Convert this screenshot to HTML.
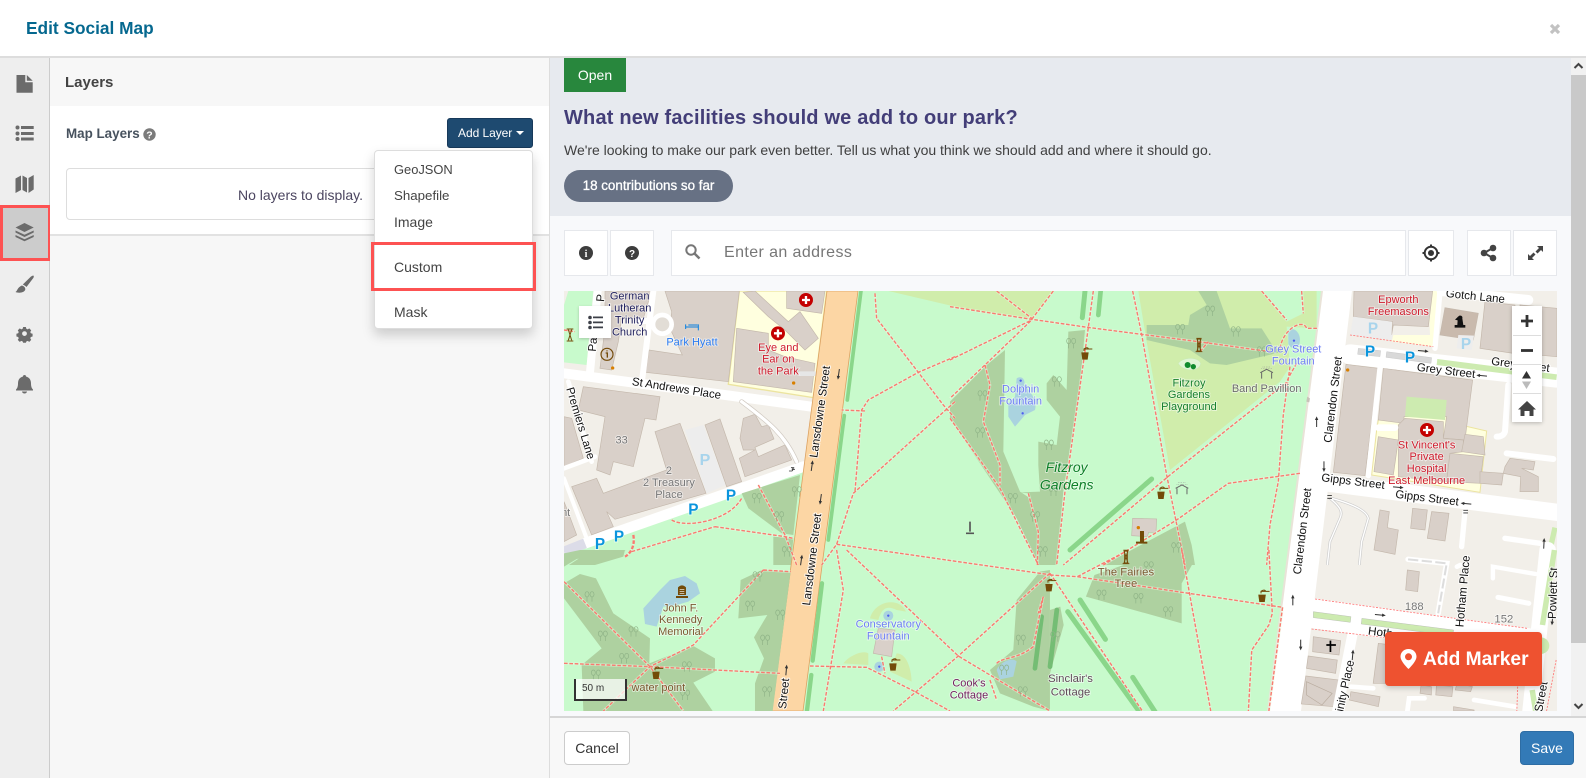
<!DOCTYPE html>
<html><head><meta charset="utf-8"><title>Edit Social Map</title>
<style>
html,body{margin:0;padding:0;width:1586px;height:778px;overflow:hidden;background:#fff;font-family:"Liberation Sans",sans-serif;color:#333}
.a{position:absolute;box-sizing:border-box;white-space:nowrap}
.tb{position:absolute;top:230px;height:46px;background:#fff;border:1px solid #e6e8ec;box-sizing:border-box}
.dd{position:absolute;left:394px;font-size:14px;color:#444;line-height:18px}
.m text{font-family:"Liberation Sans",sans-serif;font-size:33px;text-anchor:middle;paint-order:stroke;stroke:rgba(255,255,255,.55);stroke-width:5px}
.b polygon{fill:#d9d0c9;stroke:#c4b8ac;stroke-width:2}
.r path{fill:none;stroke:#fff;stroke-linecap:round}
.g path{fill:none;stroke:#8ad68a;stroke-linecap:round}
.w polygon{fill:#aed1a0}
.n text{font-size:34.5px;fill:#111;stroke-width:6px;stroke:rgba(255,255,255,.8)}
</style></head><body>

<!-- header -->
<div class="a" style="left:0;top:0;width:1586px;height:58px;background:#fff;border-bottom:2px solid #ddd"></div>
<div class="a" style="left:26px;top:17px;font-size:17.3px;font-weight:700;color:#05688f;line-height:22px">Edit Social Map</div>
<svg class="a" style="left:1549px;top:23px" width="12" height="12" viewBox="0 0 12 12"><path d="M2 2L10 10M10 2L2 10" stroke="#c2c2c2" stroke-width="3.2"/></svg>

<!-- rail -->
<div class="a" style="left:0;top:58px;width:50px;height:720px;background:#eee;border-right:1px solid #ccc"></div>
<div class="a" style="left:0;top:205px;width:51px;height:56px;background:#ccc;border:3px solid #fd5252"></div>
<svg class="a" style="left:0;top:58px" width="50" height="340" viewBox="0 58 50 340" fill="#6b6b6b">
<path d="M16.5 75H25.3V82.3H32.7V92.7H16.5ZM26.8 75L32.7 80.8H26.8Z"/>
<path d="M15.5 127.500a2 2 0 1 0 4 0a2 2 0 1 0-4 0ZM15.500 133.500a2 2 0 1 0 4 0a2 2 0 1 0-4 0ZM15.500 139a2 2 0 1 0 4 0a2 2 0 1 0-4 0ZM21 126h12.700v3H21ZM21 132h12.700v3H21ZM21 137.500h12.700v3H21Z"/>
<path d="M15.500 178.500L21 175.500V190L15.500 193ZM22.500 175.500L27 178V192.500L22.500 190ZM28.500 178L33.700 175V189.500L28.500 193Z"/>
<path d="M24.500 223L33.700 227.500L24.500 232L15.500 227.500Z"/>
<path d="M15.500 230.500L24.500 234.800L33.700 230.500V232.500L24.500 237L15.500 232.500ZM15.500 235L24.500 239.300L33.700 235V237L24.500 241.300L15.500 237Z"/>
<path d="M33 275.500C34 275.500 34 277 33.300 278L26.500 287C25.500 286 24 285 22.800 284.500L31 276.500ZM21.800 285.500C24 286 25.500 287.500 25.300 289.500C24.500 292.700 19 293.500 15.500 292C17.500 291 17.200 287.500 21.800 285.500Z"/>
<g transform="translate(24.500,333.600) scale(.8) translate(-24.500,-334.300)"><path fill-rule="evenodd" d="M22.800 326h3.400l.6 2.300 1.600.7 2.100-1.200 2.400 2.400-1.200 2.100.7 1.600 2.200.6v3.400l-2.200.6-.7 1.600 1.200 2.100-2.400 2.400-2.100-1.200-1.600.7-.6 1.700h-3.400l-.6-1.700-1.600-.7-2.100 1.200-2.400-2.400 1.200-2.100-.7-1.600-2.200-.6v-3.400l2.200-.6.7-1.600-1.200-2.100 2.400-2.400 2.100 1.200 1.600-.7ZM24.500 331.300a3 3 0 1 0 0 6a3 3 0 1 0 0-6Z"/></g>
<path d="M24.500 375a1.500 1.500 0 0 1 1.500 1.500C29.500 377.500 31 380 31 383.500C31 387 32 388.500 33 389.500V390.500H16V389.500C17 388.500 18 387 18 383.500C18 380 19.500 377.500 23 376.500A1.500 1.500 0 0 1 24.500 375ZM22 391.500H27A2.500 2 0 0 1 22 391.500Z"/>
</svg>

<!-- left panel -->
<div class="a" style="left:50px;top:58px;width:500px;height:720px;background:#f7f7f7;border-right:1px solid #ddd"></div>
<div class="a" style="left:65px;top:73px;font-size:15px;font-weight:700;color:#444;line-height:20px">Layers</div>
<div class="a" style="left:50px;top:106px;width:499px;height:130px;background:#fff;border-bottom:2px solid #e2e2e2"></div>
<div class="a" style="left:66px;top:125px;font-size:13.4px;font-weight:700;color:#47525e;line-height:18px">Map Layers</div>
<svg class="a" style="left:143px;top:128px" width="13" height="13" viewBox="0 0 13 13"><circle cx="6.500" cy="6.500" r="6.200" fill="#7b7b7b"/><text x="6.500" y="10.300" font-size="10.500" font-weight="700" fill="#fff" text-anchor="middle" font-family="Liberation Sans">?</text></svg>
<div class="a" style="left:447px;top:118px;width:86px;height:30px;background:#1e4a70;border:1px solid #17395a;border-radius:3px;color:#fff;font-size:12px;line-height:28px;padding-left:10px;letter-spacing:-.05px">Add Layer<span style="display:inline-block;margin-left:4px;vertical-align:2px;border-top:4px solid #fff;border-left:4px solid transparent;border-right:4px solid transparent"></span></div>
<div class="a" style="left:66px;top:168px;width:467px;height:52px;background:#fff;border:1px solid #ddd;border-radius:4px"></div>
<div class="a" style="left:238px;top:186px;font-size:14px;color:#4b4560;line-height:18px">No layers to display.</div>
<div class="a" style="left:374px;top:150px;width:159px;height:179px;background:#fff;border:1px solid #ddd;border-radius:4px;box-shadow:0 6px 12px rgba(0,0,0,.18)"></div>
<div class="dd" style="top:161px;font-size:12.900px">GeoJSON</div>
<div class="dd" style="top:187px;font-size:13.300px">Shapefile</div>
<div class="dd" style="top:213px">Image</div>
<div class="dd" style="top:258px">Custom</div>
<div class="dd" style="top:303px">Mask</div>
<div class="a" style="left:371px;top:242px;width:165px;height:49px;border:3px solid #fd5252"></div>

<!-- right panel -->
<div class="a" style="left:550px;top:58px;width:1021px;height:158px;background:#e7eaef"></div>
<div class="a" style="left:550px;top:216px;width:1021px;height:500px;background:#f8f9fb"></div>
<div class="a" style="left:564px;top:58px;width:62px;height:34px;background:#28873d;color:#fff;font-size:14px;line-height:35px;text-align:center">Open</div>
<div class="a" style="left:564px;top:105px;font-size:20px;font-weight:700;color:#433e78;line-height:26px;letter-spacing:.18px">What new facilities should we add to our park?</div>
<div class="a" style="left:564px;top:141px;font-size:14px;color:#3f3f3f;line-height:18px;letter-spacing:-.02px">We're looking to make our park even better. Tell us what you think we should add and where it should go.</div>
<div class="a" style="left:564px;top:170px;width:169px;height:32px;background:#677184;border-radius:16px;color:#fff;font-size:13.400px;-webkit-text-stroke:.3px #fff;line-height:32px;text-align:center">18 contributions so far</div>

<div class="tb" style="left:564px;width:44px"></div>
<div class="tb" style="left:610px;width:44px"></div>
<div class="tb" style="left:671px;width:735px"></div>
<div class="tb" style="left:1408px;width:46px"></div>
<div class="tb" style="left:1467px;width:44px"></div>
<div class="tb" style="left:1513px;width:44px"></div>
<svg class="a" style="left:560px;top:225px" width="1000" height="60" viewBox="560 225 1000 60">
<circle cx="586" cy="253" r="7" fill="#3d3d3d"/><text x="586" y="257" fill="#fff" font-size="10" font-weight="700" text-anchor="middle" font-family="Liberation Serif">i</text>
<circle cx="632" cy="253" r="7" fill="#3d3d3d"/><text x="632" y="257" fill="#fff" font-size="10" font-weight="700" text-anchor="middle" font-family="Liberation Sans">?</text>
<circle cx="691" cy="250" r="4.700" fill="none" stroke="#777" stroke-width="2"/><path d="M694.500 253.500L699.500 258.500" stroke="#777" stroke-width="2.500"/>
<circle cx="1431" cy="253" r="6.300" fill="none" stroke="#333" stroke-width="2"/><circle cx="1431" cy="253" r="3" fill="#333"/><path d="M1431 244.500v3M1431 258.500v3M1422.500 253h3M1436.500 253h3" stroke="#333" stroke-width="2"/>
<circle cx="1484" cy="253" r="3.300" fill="#444"/><circle cx="1493" cy="248" r="3.300" fill="#444"/><circle cx="1493" cy="258" r="3.300" fill="#444"/><path d="M1484 253L1493 248M1484 253L1493 258" stroke="#444" stroke-width="2"/>
<path d="M1543 246V252L1541 250L1537.500 253.500L1535.500 251.500L1539 248L1537 246ZM1528 260V254L1530 256L1533.500 252.500L1535.500 254.500L1532 258L1534 260Z" fill="#444"/>
</svg>
<div class="a" style="left:724px;top:242px;font-size:16px;color:#777;line-height:22px;letter-spacing:.4px">Enter an address</div>

<!-- scrollbar -->
<div class="a" style="left:1571px;top:58px;width:15px;height:658px;background:#f1f1f1"></div>
<div class="a" style="left:1571px;top:75px;width:15px;height:568px;background:#c9c9c9"></div>
<svg class="a" style="left:1571px;top:58px" width="15" height="658" viewBox="0 0 15 658"><path d="M3.500 10L7.500 6L11.500 10" fill="none" stroke="#444" stroke-width="2"/><path d="M3.500 646L7.500 650L11.500 646" fill="none" stroke="#444" stroke-width="2"/></svg>

<!-- map -->
<svg class="a m" style="left:564px;top:291px" width="993" height="420" viewBox="564 291 993 420">
<defs>
<g id="tr"><path d="M-7,-9a6,8 0 1 1 .1,0M-7,-9v14M8,-9a6,8 0 1 1 .1,0M8,-9v14" fill="none" stroke="#8fb387" stroke-width="2"/></g>
<g id="bk"><path d="M-11,-10H11L8,12H-8Z" fill="#734a08"/><path d="M-3,-14V-20H22M-3,-20C3,-26 10,-24 10,-20" fill="none" stroke="#734a08" stroke-width="3"/></g>
<g id="ar"><path d="M0,16V-8" stroke="#333" stroke-width="3" fill="none"/><path d="M0,-16L5,-5H-5Z" fill="#333"/></g>
<g id="cr"><circle r="21" fill="#c40000"/><path d="M-3.500,-12h7v8.500h8.500v7h-8.500v8.500h-7v-8.500h-8.500v-7h8.500Z" fill="#fff"/></g>
<g id="tw"><path d="M-10,20H10M-8,-20H8M-6,-18L6,18M6,-18L-6,18M-4,-18H4V18H-4Z" stroke="#734a08" stroke-width="3" fill="none"/></g>
<g id="pv"><path d="M-19,-2L0,-12L19,-2M-15,-2V16M15,-2V16" fill="none" stroke="#666" stroke-width="3"/><path d="M-16,-14h32M-12,-19h24" stroke="#999" stroke-width="2" stroke-dasharray="2 3"/></g>
<g id="dsh">
<g transform="translate(950,285) scale(.3333)"><path d="M0,65L245,103L420,128L575,148L745,170L960,200M140,18L245,100M310,18L240,110L110,235L0,340M0,225L245,105M430,18L405,200L345,620L320,840M548,18L575,148L650,570L705,840M0,400L150,610L265,840M235,625L265,740L262,840M105,240L120,300L100,410L150,540L150,600M1000,300L660,570L340,840M1050,565L835,595L680,705L460,840M1020,245L1000,390L985,590L960,720L950,840M990,190C1000,130 1060,100 1070,130L1105,130M935,18L1010,105M1040,235L1020,270L1000,310M750,200L775,170M1055,18L1060,85"/></g>
<g transform="translate(555,285) scale(.3333)"><path d="M960,25L965,100L1090,262L1165,360L1200,400M1200,215L1090,262L940,345L920,375L900,620M930,378L860,375M1200,350L895,625L845,778L800,840M845,778L1490,870M350,705C390,730 520,710 560,640M480,725L690,755L715,760M610,600L690,750L725,840M230,800L480,725M27,135L60,140"/><path d="M235,750C242,790 220,810 210,815" stroke-width="7"/></g>
<g transform="translate(550,550) scale(.3333)"><path d="M42,95L300,350L400,483M42,340L300,350L690,370M640,60L722,65M640,60L430,285L300,350L160,483M860,0L880,120L820,483M780,348L950,352L1095,425L1200,483M890,0L1225,318L1500,483M1500,70L1225,318L1030,483M995,320L1005,370M1320,390L1340,450M1340,340C1360,320 1400,330 1450,290L1480,140L1465,190"/></g>
<g transform="translate(1050,550) scale(.342,.3333)"><path d="M0,75L80,80L680,172M80,80L230,0M385,0L470,483M0,70L270,483M640,0L650,190L640,225L590,300L580,483M680,172L640,483"/></g>
</g>
</defs>
<rect x="564" y="291" width="993" height="420" fill="#c8facc"/>

<!-- left city -->
<polygon points="564,291 828,291 806,467 583,547 564,555" fill="#f2efe9"/>

<g transform="translate(555,285) scale(.3333)">
<polygon points="40,18 115,18 95,240 27,232 27,60" fill="#c8facc"/>
<polygon points="1000,18 1200,18 1200,65" fill="#d0edab"/>
<polygon points="553,18 815,18 775,338 520,298" fill="#ffffdf" stroke="#ece49f" stroke-width="4"/>
<g class="b">
<polygon points="150,18 290,18 265,100 200,100 190,170 170,255 135,250 150,130"/>
<polygon points="330,18 553,18 520,290 272,262 282,195 382,210 345,130 350,80"/>
<polygon points="565,22 600,18 700,110 735,80 790,160 750,195 690,135 640,95"/>
<polygon points="695,18 810,18 800,85 695,70"/>
<polygon points="545,130 640,145 640,195 690,215 780,235 770,322 535,290"/>
<polygon points="85,305 315,335 303,405 270,400 235,545 175,530 165,570 125,555 150,395 70,375"/>
<polygon points="27,395 50,400 85,520 27,545"/>
<polygon points="300,440 375,415 453,625 180,703 155,680 175,725 110,750 50,605 125,580 145,625 335,555"/>
<polygon points="450,420 495,402 560,590 515,605"/>
<polygon points="555,460 565,400 600,388 620,425 640,420 657,462 600,487 610,515 690,480 710,525 570,575 553,520 600,495 565,495"/>
<polygon points="27,650 35,670 65,750 27,770"/>
</g>
<polygon points="390,435 445,420 512,600 455,625" fill="#ededed"/>
<g class="r">
<path d="M128,18L105,262" stroke-width="24"/>
<path d="M295,18L262,280" stroke-width="18"/>
<path d="M27,265L770,365" stroke-width="30"/>
<path d="M40,290L110,530" stroke-width="14"/>
<path d="M27,550L120,515" stroke-width="14"/>
<path d="M27,580L95,760" stroke-width="12"/>
<path d="M560,350C640,410 690,450 725,530" stroke-width="14" style="stroke:#cfc8c0"/>
<path d="M560,350C640,410 690,450 725,530" stroke-width="10"/>
<path d="M90,775L745,545" stroke-width="32"/>
<path d="M735,266H780" stroke-width="14" style="stroke:#e6e6e6"/>
</g>
<path d="M27,800L90,775" stroke="#dcdce8" stroke-width="30"/>
<circle cx="322" cy="118" r="28" fill="#e2ddd6" stroke="#fff" stroke-width="14"/>
<path d="M285,108H240" stroke="#fff" stroke-width="18"/>
<g class="w"><polygon points="560,625 735,570 715,750 680,745 580,670"/><polygon points="655,755 715,760 708,840 655,840"/><polygon points="42,840 80,815 210,795 205,815 120,840"/></g>
</g>

<!-- lansdowne -->
<polygon points="827,291 858,291 803,711 772,711" fill="#fcd6a4" stroke="#dca262" stroke-width=".8"/>

<!-- right city -->
<polygon points="1350,291 1557,291 1557,711 1300,711" fill="#f2efe9"/>
<polygon points="1322,291 1352,291 1301,711 1268,711" fill="#fff"/>
<path d="M1322,291L1268,711" stroke="#e9e3d8" stroke-width="2"/>

<!-- park z6 areas -->
<g transform="translate(550,550) scale(.3333)">
<g class="w">
<polygon points="42,100 90,72 138,85 190,190 300,265 298,340 430,288 495,325 495,365 430,398 488,483 100,483 95,345 155,295 42,145"/>
<polygon points="572,90 640,58 722,65 668,483 615,483 615,400 642,325 612,262 652,195 565,205"/>
<polygon points="42,50 80,27 230,0 90,0 42,10"/>
<polygon points="1500,60 1470,65 1400,150 1390,300 1320,360 1350,430 1450,470 1500,483"/>
</g>
<path d="M360,90L405,78L440,100L450,130L415,155L380,165L340,170L320,230L285,222L280,175L330,120Z" fill="#aad3df"/>
<path d="M1340,360C1350,335 1390,320 1400,335L1390,380L1350,388Z" fill="#aad3df"/>
<path d="M960,205C975,150 1050,140 1068,185L1040,180C1010,165 995,175 985,210Z" fill="#d0edab"/>
<path d="M880,340C900,315 940,300 955,310V345ZM1040,310C1075,310 1085,370 1085,395L1020,365Z" fill="#d0edab"/>
<polygon points="985,235 1035,240 1025,320 970,310" fill="#d9d0c9" stroke="#c4b8ac" stroke-width="2"/>
<circle cx="1015" cy="197" r="15" fill="#aad3df"/><circle cx="1015" cy="197" r="3.500" fill="#4d5ef0"/>
<circle cx="988" cy="350" r="15" fill="#aad3df"/><circle cx="988" cy="350" r="3.500" fill="#4d5ef0"/>
<polygon points="1246,410 1266,410 1262,432 1246,430" fill="#d9d0c9"/>
</g>

<!-- park z4 areas -->
<g transform="translate(950,285) scale(.3333)">
<polygon points="0,18 310,18 243,103 0,65" fill="#d0edab"/>
<polygon points="565,18 935,18 1010,110 1060,85 1060,18 1100,18 1100,130 1010,125 1020,245 990,290 660,555 590,170" fill="#d0edab"/>
<g class="w">
<polygon points="745,18 800,18 840,130 935,130 970,185 1000,200 830,240 780,235 720,195 590,165 590,120 715,120 720,90 770,60"/>
<polygon points="355,140 405,135 390,300 340,620 320,840 265,840 235,625 210,622 270,620 265,540 265,470 320,480 330,395 290,345 290,295 310,270 350,315"/>
<polygon points="0,350 110,240 165,195 160,500 210,620 240,640 265,840 200,700 0,400"/>
<polygon points="460,840 705,710 725,780 735,840"/>
</g>
<path d="M685,235C700,215 745,215 752,235C750,260 700,262 685,235Z" fill="#dff5d5" stroke="#bfe5b5"/>
<circle cx="713" cy="240" r="9" fill="#0f8a2d"/><circle cx="730" cy="245" r="8" fill="#0f8a2d"/>
<path d="M1015,135C1030,125 1050,140 1050,165C1050,195 1020,195 1015,175Z" fill="#aad3df"/><circle cx="1032" cy="167" r="3.500" fill="#4d5ef0"/>
<path d="M200,280C215,270 228,285 222,300C245,325 262,345 255,375L225,390L195,425L175,395L175,355L195,335Z" fill="#aad3df"/>
<circle cx="212" cy="287" r="3.500" fill="#4d5ef0"/><circle cx="218" cy="385" r="3.500" fill="#4d5ef0"/>
<polygon points="548,700 620,702 618,742 596,742 592,755 545,752" fill="#d9d0c9" stroke="#c4b8ac" stroke-width="2"/><circle cx="565" cy="728" r="5" fill="#d87f00"/>
<path d="M1072,335l8,5l-2,12l-9,-2Z" fill="#c8c2b8"/>
</g>

<g transform="translate(1050,550) scale(.342,.3333)">
<g class="w"><polygon points="105,140 130,75 300,15 415,0 415,45 385,100 385,220"/><polygon points="0,180 30,170 40,225 0,370"/></g>
</g>

<!-- z5 right city detail -->
<g transform="translate(1250,285) scale(.3333)">
<polygon points="315,18 565,18 550,185 300,150" fill="#f2efe9"/>
<polygon points="535,18 565,18 550,185 425,170 430,150 540,150" fill="#ffffdf"/>
<polygon points="460,328 595,342 588,410 710,438 690,622 365,570 380,435 385,405 455,400" fill="#ffffdf" stroke="#ece49f" stroke-width="3"/>
<g class="b">
<polygon points="312,18 548,18 535,125 430,120 425,150 428,110 310,95"/>
<polygon points="585,68 685,85 670,165 570,150" style="fill:#c9baad"/>
<polygon points="705,50 795,60 790,205 690,190"/>
<polygon points="810,60 921,70 921,215 805,205"/>
<polygon points="288,238 385,250 345,572 250,562"/>
<polygon points="400,250 668,285 650,425 645,465 580,460 590,395 462,395 462,415 385,405"/>
<polygon points="445,420 465,400 580,410 580,460 640,465 640,500 600,505 590,590 445,575"/>
<polygon points="385,455 445,465 430,570 372,560"/>
<polygon points="645,448 700,455 705,510 635,500"/>
<polygon points="600,505 700,515 690,595 590,590"/>
<polygon points="690,560 760,565 755,600 690,595"/>
<polygon points="780,520 855,530 850,555 815,550 865,575 865,620 810,620 812,575 760,565 765,545"/>
<polygon points="390,675 418,680 412,728 445,735 435,808 372,795"/>
<polygon points="488,670 532,675 525,735 482,730"/>
<polygon points="545,680 597,685 585,768 532,760"/>
</g>
<polygon points="310,95 425,110 425,165 300,150" fill="#ededed"/>
<polygon points="625,150 672,152 665,195 620,190" fill="#ededed"/>
<polygon points="470,335 590,345 585,405 465,395" fill="#cdebb0"/>
<g class="r">
<path d="M570,18L555,190" stroke-width="16"/>
<path d="M575,18L835,45" stroke-width="30"/>
<path d="M300,208L921,278" stroke-width="60"/>
<path d="M240,595L921,682" stroke-width="52"/>
<path d="M390,250L355,572" stroke-width="16"/>
<path d="M385,428H435" stroke-width="20"/>
<path d="M775,300L765,440Q760,455 740,455" stroke-width="18"/>
<path d="M770,505L910,522" stroke-width="18"/>
<path d="M645,680L635,785" stroke-width="16"/>
<path d="M765,760L870,775" stroke-width="16"/>
</g>
<polygon points="325,190 392,197 390,215 323,208" fill="#d9d9d9" stroke="#bbb"/>
<polygon points="410,200 545,218 543,235 408,217" fill="#d9d9d9" stroke="#bbb"/>
<polygon points="562,222 921,268 919,285 560,240" fill="#cdebb0"/>
<path d="M245,640C300,655 350,675 355,700L335,770L328,840M240,640C270,665 280,680 270,700L240,770L232,840" fill="none" stroke="#ccc" stroke-width="8"/>
<path d="M245,640C300,655 350,675 355,700L335,770L328,840M240,640C270,665 280,680 270,700L240,770L232,840" fill="none" stroke="#fff" stroke-width="4"/>
<path d="M915,728L890,840" stroke="#cdebb0" stroke-width="16"/>
<circle cx="293" cy="255" r="5" fill="#d87f00"/>
<use href="#cr" x="531" y="435"/>
<path d="M300,150L550,185" stroke="#f77" stroke-width="2.500" stroke-dasharray="6 4"/>
<path d="M628,92h5a8,7 0 0 1 4,8l3,20h6v8h-32v-8h8l1,-14l-8,-2Z" fill="#111"/><circle cx="628" cy="100" r="6" fill="#111"/>
</g>

<!-- z7 right-bottom -->
<g transform="translate(1050,550) scale(.342,.3333)">
<g class="b">
<polygon points="1045,60 1080,65 1075,125 1040,120"/>
<polygon points="770,260 850,272 845,315 768,305"/>
<polygon points="755,318 840,330 835,370 750,355"/>
<polygon points="748,378 845,390 830,470 735,462"/>
<polygon points="960,280 1000,285 980,400 945,400"/>
<polygon points="880,425 965,440 960,470 875,450"/>
<polygon points="1085,405 1115,410 1115,435 1082,430"/>
<polygon points="1130,405 1178,410 1175,440 1128,435"/>
<polygon points="1190,400 1235,410 1230,425 1185,420"/>
<polygon points="1180,470 1240,480 1240,483 1180,483"/>
</g>
<path d="M750,395L825,430L795,465L750,435Z" fill="none" stroke="#b9ac9f" stroke-width="2"/>
<g class="r">
<path d="M1047,28L1160,40L1135,190" stroke-width="16"/>
<path d="M1420,72L1295,50L1295,85" stroke-width="13"/>
<path d="M1310,142L1400,160" stroke-width="15"/>
<path d="M1200,45L1190,50" stroke-width="14"/>
<path d="M770,190L1400,280" stroke-width="90"/>
<path d="M885,250L840,483" stroke-width="30"/>
<path d="M880,410L945,415" stroke-width="14"/>
<path d="M1045,483L1050,445L1095,445" stroke-width="14"/>
<path d="M1240,450L1360,470" stroke-width="14"/>
<path d="M1455,0L1405,483" stroke-width="48"/>
</g>
<path d="M1047,28L1160,40L1135,190" fill="none" stroke="#ddd" stroke-width="6" stroke-dasharray="30 10"/>
<polygon points="770,185 880,200 878,217 770,203" fill="#cdebb0" stroke="#aaa"/>
<polygon points="912,205 1180,240 1178,258 910,222" fill="#cdebb0" stroke="#aaa"/>
<path d="M1475,0L1440,225" stroke="#cdebb0" stroke-width="16"/>
<path d="M1420,483L1410,420" stroke="#cdebb0" stroke-width="16"/>
<circle cx="1435" cy="287" r="25" fill="#cdebb0"/>
<path d="M820,272V306M808,285H836" stroke="#000" stroke-width="5"/>
<path d="M775,147L1395,235M765,237L1000,265M1370,340L1365,483M1480,330L1452,483" stroke="#f77" stroke-width="2.500" stroke-dasharray="6 4" fill="none"/>
</g>

<!-- green strips -->
<g class="g">
<g transform="translate(555,285) scale(.3333)"><path d="M918,18L877,345" stroke-width="11"/><path d="M868,392L820,765" stroke-width="11"/></g>
<g transform="translate(550,550) scale(.3333)"><path d="M816,100L788,332" stroke-width="13"/><path d="M784,375L770,490" stroke-width="13"/><path d="M1475,200L1455,355" stroke-width="14" style="stroke:#74bd74"/></g>
<g transform="translate(950,285) scale(.3333)"><path d="M405,18L397,98" stroke-width="15"/><path d="M452,18L445,90" stroke-width="14"/><path d="M605,582L360,795" stroke-width="15"/></g>
<g transform="translate(1050,550) scale(.342,.3333)"><path d="M88,150L162,268" stroke-width="15"/><path d="M52,185L265,490" stroke-width="15"/><path d="M242,382L310,490" stroke-width="15"/><path d="M20,180L0,350" stroke-width="14" style="stroke:#74bd74"/></g>
</g>

<!-- dashed paths -->
<g fill="none">
<g stroke="#eafbe3" stroke-width="8" opacity=".55"><use href="#dsh"/></g>
<g stroke="#fa7a70" stroke-width="4.200" stroke-dasharray="11 5"><use href="#dsh"/></g>
</g>

<!-- trees -->
<g transform="translate(950,285) scale(.3333)">
<use href="#tr" x="780" y="88"/><use href="#tr" x="690" y="143"/><use href="#tr" x="857" y="150"/><use href="#tr" x="935" y="210"/><use href="#tr" x="363" y="185"/><use href="#tr" x="320" y="300"/><use href="#tr" x="97" y="342"/><use href="#tr" x="90" y="453"/><use href="#tr" x="296" y="490"/><use href="#tr" x="310" y="628"/><use href="#tr" x="188" y="650"/><use href="#tr" x="255" y="705"/><use href="#tr" x="278" y="810"/><use href="#tr" x="678" y="798"/>
</g>
<g transform="translate(550,550) scale(.3333)">
<use href="#tr" x="118" y="150"/><use href="#tr" x="158" y="268"/><use href="#tr" x="250" y="255"/><use href="#tr" x="222" y="335"/><use href="#tr" x="137" y="385"/><use href="#tr" x="410" y="360"/><use href="#tr" x="405" y="445"/><use href="#tr" x="600" y="178"/><use href="#tr" x="690" y="205"/><use href="#tr" x="645" y="280"/><use href="#tr" x="651" y="435"/><use href="#tr" x="622" y="90"/><use href="#tr" x="1412" y="280"/><use href="#tr" x="1418" y="435"/><use href="#tr" x="1362" y="370"/>
</g>
<g transform="translate(555,285) scale(.3333)"><use href="#tr" x="605" y="650"/><use href="#tr" x="672" y="705"/><use href="#tr" x="725" y="630"/><use href="#tr" x="695" y="810"/></g>
<g transform="translate(1050,550) scale(.342,.3333)"><use href="#tr" x="150" y="145"/><use href="#tr" x="258" y="155"/><use href="#tr" x="345" y="195"/><use href="#tr" x="288" y="60"/><use href="#tr" x="15" y="270"/></g>

<!-- POI z3 -->
<g transform="translate(555,285) scale(.3333)">
<use href="#cr" x="753" y="45"/><use href="#cr" x="669" y="145"/>
<circle cx="173" cy="249" r="5" fill="#d87f00"/><circle cx="716" cy="294" r="5" fill="#d87f00"/>
<circle cx="156" cy="208" r="18" fill="none" stroke="#734a08" stroke-width="3.500"/><path d="M156,196v3M152,204h5v14" stroke="#734a08" stroke-width="4" fill="none"/>
<path d="M392,132V118M392,126H430M430,118V136M400,120H428" stroke="#0a7fe0" stroke-width="3" fill="none"/>
<path d="M35,132H55M35,168H55M40,134L50,166M50,134L40,166" stroke="#734a08" stroke-width="3" fill="none"/>
<path d="M708,548h8l-4,5h8M702,558h9l4,-5" stroke="#333" stroke-width="2.500" fill="none"/>
<use href="#ar" transform="translate(771,542) rotate(8)"/><use href="#ar" transform="translate(851,268) rotate(188)"/><use href="#ar" transform="translate(797,643) rotate(188)"/><use href="#ar" transform="translate(739,825) rotate(8)"/>
</g>
<g transform="translate(550,550) scale(.3333)">
<use href="#bk" x="318" y="375"/><use href="#bk" x="1029" y="350"/>
<path d="M384,135V112Q396,100 408,112V135ZM378,138H414V144H378Z" fill="#734a08"/><path d="M389,118H403M389,124H403M389,130H403" stroke="#fff" stroke-width="2"/>
<use href="#ar" transform="translate(709,360) rotate(5)"/>
<use href="#bk" x="1497" y="112"/>
</g>
<g transform="translate(950,285) scale(.3333)">
<use href="#bk" x="405" y="212"/><use href="#bk" x="633" y="630"/>
<use href="#tw" x="747" y="180"/><use href="#tw" x="528" y="816"/>
<use href="#pv" x="950" y="265"/><use href="#pv" x="696" y="612"/>
<path d="M60,710V740M48,745H72" stroke="#555" stroke-width="5"/>
<path d="M570,738H582V770H592V776H558V770H570Z" fill="#734a08"/>
<use href="#ar" transform="translate(1100,410)"/><use href="#ar" transform="translate(1122,545) rotate(180)"/>
<path d="M1133,640h10M1133,632h10" stroke="#333" stroke-width="2"/>
</g>
<g transform="translate(1050,550) scale(.342,.3333)">
<use href="#bk" x="620" y="144"/><use href="#ar" transform="translate(710,150)"/><use href="#ar" transform="translate(733,285) rotate(180)"/><use href="#ar" transform="translate(885,315) rotate(5)"/><use href="#ar" transform="translate(1469,210) rotate(185)"/><use href="#ar" transform="translate(966,195) rotate(95)"/>
</g>
<g transform="translate(1250,285) scale(.3333)">
<use href="#ar" transform="translate(520,198) rotate(95)"/><use href="#ar" transform="translate(695,272) rotate(-85)"/><use href="#ar" transform="translate(445,607) rotate(95)"/><use href="#ar" transform="translate(648,656) rotate(-85)"/><use href="#ar" transform="translate(882,775) rotate(3)"/>
<path d="M232,632h14M232,640h14M640,676h14M640,684h14" stroke="#333" stroke-width="2.500"/>
<path d="M435,-3A10 10 0 0 0 455,-3" fill="#c40000"/>
</g>

<!-- labels -->
<g transform="translate(555,285) scale(.3333)">
<g fill="#22225f">
<text x="224" y="44">German</text><text x="224" y="80">Lutheran</text><text x="224" y="116">Trinity</text><text x="224" y="151">Church</text></g>
<text x="411" y="182" fill="#2a7bf0">Park Hyatt</text>
<g fill="#cf1d2e"><text x="670" y="198">Eye and</text><text x="670" y="233">Ear on</text><text x="670" y="269">the Park</text></g>
<g fill="#777"><text x="200" y="476">33</text><text x="342" y="567">2</text><text x="342" y="603">2 Treasury</text><text x="342" y="639">Place</text><text x="32" y="693">nt</text></g>
<g class="n">
<text transform="translate(363,321) rotate(9)">St Andrews Place</text>
<text transform="translate(66,418) rotate(73)">Premiers Lane</text>
<text transform="translate(125,170) rotate(-85)">Parl</text>
<text transform="translate(148,40) rotate(-85)">P</text>
<text transform="translate(806,382) rotate(-82)">Lansdowne Street</text>
<text transform="translate(782,825) rotate(-83)">Lansdowne Street</text>
</g>
<g font-weight="700" fill="#0a95dd"><text x="528" y="646" style="font-size:46px">P</text><text x="415" y="689" style="font-size:46px">P</text><text x="192" y="770" style="font-size:46px">P</text><text x="135" y="792" style="font-size:46px">P</text></g>
<text x="450" y="540" fill="#a8d4ec" style="font-size:48px;font-weight:700;stroke:none">P</text>
</g>
<g transform="translate(550,550) scale(.3333)">
<g fill="#7c5a31"><text x="392" y="184">John F.</text><text x="392" y="219">Kennedy</text><text x="392" y="255">Memorial</text><text x="325" y="423">water point</text></g>
<g fill="#6f7ef5"><text x="1015" y="233">Conservatory</text><text x="1015" y="268">Fountain</text></g>
<g fill="#73235f"><text x="1257" y="409">Cook's</text><text x="1257" y="445">Cottage</text></g>
<g class="n"><text transform="translate(713,432) rotate(-84)">Street</text></g>
</g>
<g transform="translate(950,285) scale(.3333)">
<g fill="#6f7ef5"><text x="212" y="323">Dolphin</text><text x="212" y="359">Fountain</text><text x="1030" y="202">Grey Street</text><text x="1030" y="238">Fountain</text></g>
<g fill="#0e8028" font-style="italic"><text x="350" y="561" style="font-size:42px">Fitzroy</text><text x="350" y="614" style="font-size:42px">Gardens</text></g>
<g fill="#157f2c"><text x="717" y="304">Fitzroy</text><text x="717" y="339">Gardens</text><text x="717" y="375">Playground</text></g>
<text x="950" y="321" fill="#6b6b6b">Band Pavillion</text>
</g>
<g transform="translate(1250,285) scale(.3333)">
<g fill="#cf1d2e"><text x="445" y="54">Epworth</text><text x="445" y="90">Freemasons</text><text x="530" y="490">St Vincent's</text><text x="530" y="525">Private</text><text x="530" y="561">Hospital</text><text x="530" y="597">East Melbourne</text></g>
<g class="n">
<text transform="translate(675,45) rotate(6)">Gotch Lane</text>
<text transform="translate(587,268) rotate(7)">Grey Street</text>
<text transform="translate(810,250) rotate(7)">Grey Street</text>
<text transform="translate(308,600) rotate(7)">Gipps Street</text>
<text transform="translate(530,650) rotate(7)">Gipps Street</text>
<text transform="translate(260,345) rotate(-83)">Clarendon Street</text>
<text transform="translate(168,740) rotate(-83)">Clarendon Street</text>
</g>
<g style="font-weight:700" fill="#0a95dd"><text x="360" y="215" style="font-size:46px">P</text><text x="480" y="233" style="font-size:46px">P</text></g>
<g fill="#a8d4ec"><text x="369" y="145" style="font-size:46px;stroke:none;font-weight:700">P</text><text x="648" y="192" style="font-size:46px;stroke:none;font-weight:700">P</text></g>
</g>
<g transform="translate(1050,550) scale(.342,.3333)">
<g fill="#7c5a31"><text x="222" y="76">The Fairies</text><text x="222" y="111">Tree</text></g>
<g fill="#5f4a58"><text x="60" y="396">Sinclair's</text><text x="60" y="436">Cottage</text></g>
<g fill="#777"><text x="1065" y="180">188</text><text x="1327" y="218">152</text></g>
<g class="n">
<text transform="translate(1218,125) rotate(-85)">Hotham Place</text>
<text transform="translate(965,258) rotate(7)">Hoth</text>
<text transform="translate(870,425) rotate(-78)">Trinity Place</text>
<text transform="translate(1482,130) rotate(-88)">Powlett St</text>
<text transform="translate(1447,442) rotate(-80)">Street</text>
</g>
</g>
</svg>

<!-- map controls -->
<div class="a" style="left:579px;top:306px;width:32px;height:32px;background:#fff;box-shadow:0 1px 3px rgba(0,0,0,.2)"></div>
<svg class="a" style="left:588px;top:315px" width="15" height="15" viewBox="0 0 15 15" fill="#3d4048"><circle cx="2" cy="2.500" r="1.800"/><circle cx="2" cy="7.500" r="1.800"/><circle cx="2" cy="12.500" r="1.800"/><path d="M5 1.500H15V3.300H5ZM5 6.500H15V8.300H5ZM5 11.500H15V13.300H5Z"/></svg>
<div class="a" style="left:1512px;top:306px;width:30px;height:116px;background:#fff;box-shadow:0 1px 4px rgba(0,0,0,.25)"></div>
<svg class="a" style="left:1512px;top:306px" width="30" height="116" viewBox="0 0 30 116">
<path d="M1 29.500H29M1 58.500H29M1 87.500H29" stroke="#ddd"/>
<path d="M9 15H21M15 9V21" stroke="#333" stroke-width="2.800"/>
<path d="M9 44.500H21" stroke="#333" stroke-width="2.800"/>
<path d="M14.500 65L19 72.500H10Z" fill="#333"/><path d="M14.500 83L19 75.500H10Z" fill="#bbb"/>
<path d="M15 95L24 103.500H21.500V110H17.500V105H12.500V110H8.500V103.500H6Z" fill="#444"/>
</svg>
<div class="a" style="left:574px;top:679px;width:53px;height:22px;background:rgba(255,255,255,.72);border:2px solid #333;border-top:0;font-size:10px;line-height:19px;padding-left:6px;color:#333">50 m</div>

<!-- add marker -->
<div class="a" style="left:1385px;top:632px;width:157px;height:54px;background:#ee5230;border-radius:4px;box-shadow:0 2px 6px rgba(0,0,0,.2);color:#fff;font-size:19.200px;font-weight:700;line-height:55px;padding-left:38px">Add Marker</div>
<svg class="a" style="left:1400px;top:649px" width="17" height="20" viewBox="0 0 17 20"><path fill-rule="evenodd" d="M8.500 0C3.800 0 .5 3.400 .5 7.700C.5 11.500 5.500 17 8.500 20C11.500 17 16.500 11.500 16.500 7.700C16.500 3.400 13.200 0 8.500 0ZM8.500 4.300A3.500 3.500 0 1 1 8.500 11.300A3.500 3.500 0 1 1 8.500 4.300Z" fill="#fff"/></svg>

<!-- footer -->
<div class="a" style="left:550px;top:716px;width:1036px;height:62px;background:#f8f8f8;border-top:2px solid #d6d6d6"></div>
<div class="a" style="left:564px;top:731px;width:66px;height:34px;background:#fff;border:1px solid #ccc;border-radius:4px;font-size:14px;line-height:32px;text-align:center;color:#333">Cancel</div>
<div class="a" style="left:1520px;top:731px;width:54px;height:34px;background:#337ab7;border:1px solid #2e6da4;border-radius:4px;font-size:14px;line-height:32px;text-align:center;color:#fff">Save</div>
</body></html>
